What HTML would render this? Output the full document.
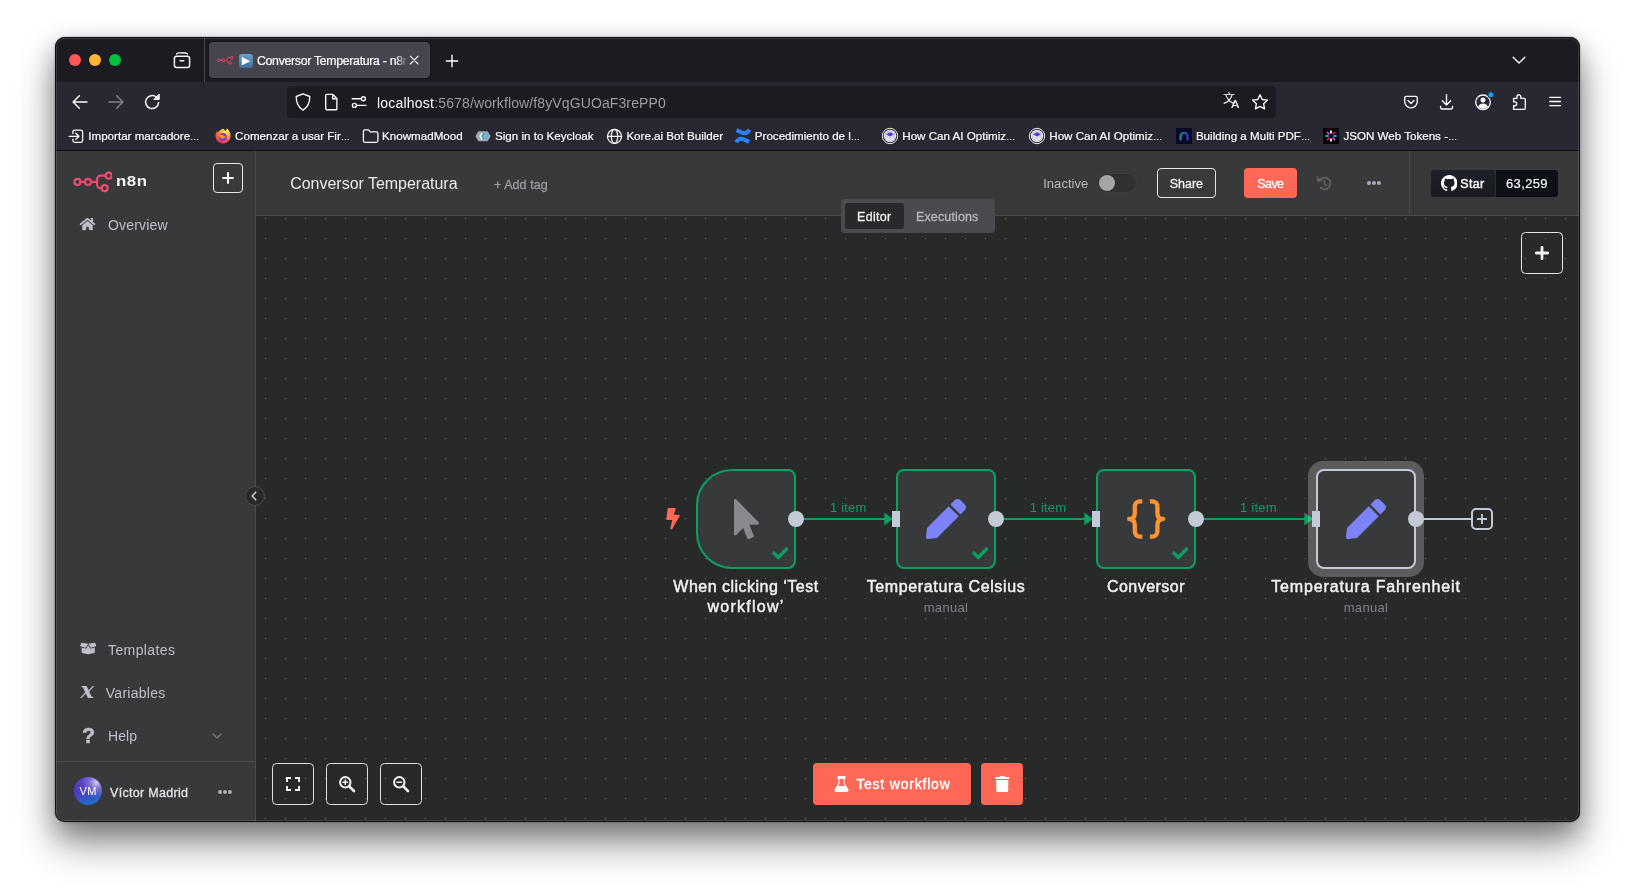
<!DOCTYPE html>
<html lang="es">
<head>
<meta charset="utf-8">
<title>Conversor Temperatura - n8n</title>
<style>
*{box-sizing:border-box;margin:0;padding:0}
html,body{width:1635px;height:895px;overflow:hidden;background:#fff}
body{font-family:"Liberation Sans",sans-serif;position:relative;color:#fff}
.abs,.abs *{position:absolute}
#win{position:absolute;left:55px;top:37px;width:1525px;height:785px;border-radius:10px;overflow:hidden;background:#27292a;z-index:2}
#shadow{position:absolute;left:55px;top:37px;width:1525px;height:785px;border-radius:10px;
 box-shadow:0 22px 38px rgba(0,0,0,.42),0 9px 24px rgba(0,0,0,.24),0 0 2px rgba(0,0,0,.4);z-index:1}
#rim{position:absolute;left:55px;top:37px;width:1525px;height:785px;border-radius:10px;z-index:50;pointer-events:none;
 box-shadow:inset 0 0 0 1px rgba(0,0,0,.75),inset 0 0 0 2px rgba(255,255,255,.13)}
/* everything inside #pg uses page coordinates */
#pg{position:absolute;left:-55px;top:-37px;width:1635px;height:895px;will-change:transform}
#pg div,#pg svg,#pg span{position:absolute}
.t{white-space:nowrap;line-height:1}
/* browser chrome */
#tabbar{left:55px;top:37px;width:1525px;height:45px;background:#1c1b22}
#navbar{left:55px;top:82px;width:1525px;height:68px;background:#292832}
#chromeline{left:55px;top:150px;width:1525px;height:1px;background:#0e0e11}
#tab{left:209px;top:42px;width:221px;height:36px;border-radius:4px;background:#45444f;box-shadow:0 0 3px rgba(0,0,0,.45)}
#urlbar{left:287px;top:86px;width:989px;height:32px;border-radius:4px;background:#1c1b22}
.bm{font-size:11.6px;color:#fbfbfe;top:129.700px;-webkit-text-stroke:.2px #fbfbfe}
/* app */
#sidebar{left:55px;top:151px;width:200px;height:671px;background:#38393b}
#sideborder{left:255px;top:151px;width:1px;height:671px;background:#4b4c4f}
#header{left:256px;top:151px;width:1324px;height:64px;background:#38393b}
#headline{left:256px;top:215px;width:1324px;height:1px;background:#4b4c4f}

.os{font-family:"Liberation Sans",sans-serif}
.nav{font-size:14px;color:#bdc0c8;left:108px}
</style>
</head>
<body>
<div id="shadow"></div>
<div id="win"><div id="pg">
<!--CHROME-->
<div id="tabbar"></div>
<div id="navbar"></div>
<div id="chromeline"></div>
<!-- traffic lights -->
<div style="left:69px;top:54px;width:12px;height:12px;border-radius:50%;background:#ff5753"></div>
<div style="left:89px;top:54px;width:12px;height:12px;border-radius:50%;background:#ffb538"></div>
<div style="left:109px;top:54px;width:12px;height:12px;border-radius:50%;background:#00c140"></div>
<!-- firefox view icon -->
<svg style="left:172px;top:50px" width="20" height="20" viewBox="172 50 20 20" fill="none" stroke="#fbfbfe" stroke-width="1.450" stroke-linecap="round" stroke-linejoin="round">
 <path d="M176.700 54a1.900 1.900 0 0 1 1.700-1.100h7.200a1.900 1.900 0 0 1 1.700 1.100"/><rect x="174.400" y="56.300" width="15.200" height="11.200" rx="2.300"/><path d="M180.200 60.700h3.600"/>
</svg>
<div style="left:204px;top:37px;width:1px;height:45px;background:#4a4953"></div>
<!-- tab -->
<div id="tab"></div>
<svg style="left:216.500px;top:54.700px" width="17" height="10.500" viewBox="0 0 39 21" fill="none" stroke="#c9445f" stroke-width="2.6">
 <circle cx="4.5" cy="10.5" r="3"/><circle cx="14.5" cy="10.5" r="3"/><circle cx="34" cy="4.5" r="3"/><circle cx="30" cy="16.5" r="3"/>
 <path d="M7.5 10.5h4M17.5 10.5h3c3 0 2.5-6 6-6h4.5M20.5 10.5c3 0 2.5 6 6.5 6"/>
</svg>
<div style="left:239px;top:54px;width:14px;height:14px;border-radius:3px;background:linear-gradient(#6e9fc6,#3d719e)"></div>
<span class="t" style="left:239px;top:54px;width:14px;height:14px;font-family:'DejaVu Sans',sans-serif;font-size:11px;line-height:14px;text-align:center;color:#fff">▶</span>
<div style="left:257px;top:48px;width:152px;height:24px;overflow:hidden;-webkit-mask-image:linear-gradient(to right,#000 139px,transparent 151px);mask-image:linear-gradient(to right,#000 139px,transparent 151px)">
 <span class="t" style="left:0;top:7px;font-size:12.3px;color:#fbfbfe;letter-spacing:-0.3px;-webkit-text-stroke:.2px #fbfbfe">Conversor Temperatura - n8n</span>
</div>
<svg style="left:408px;top:54px" width="12" height="12" viewBox="0 0 12 12" fill="none" stroke="#fbfbfe" stroke-width="1.1" stroke-linecap="round"><path d="M2.3 2.2l7.8 7.8M10.1 2.2L2.3 10"/></svg>
<svg style="left:445px;top:54px" width="14" height="14" viewBox="0 0 14 14" fill="none" stroke="#fbfbfe" stroke-width="1.4" stroke-linecap="round"><path d="M7 1.3v11.4M1.3 7h11.4"/></svg>
<svg style="left:1511px;top:53px" width="16" height="14" viewBox="0 0 16 14" fill="none" stroke="#fbfbfe" stroke-width="1.4" stroke-linecap="round" stroke-linejoin="round"><path d="M2.2 4.2l5.8 5.8 5.8-5.8"/></svg>
<!-- nav buttons -->
<svg style="left:70px;top:92px" width="20" height="20" viewBox="70 92 20 20" fill="none" stroke="#fbfbfe" stroke-width="1.45" stroke-linecap="round" stroke-linejoin="round"><path d="M87 102H73.2M79.3 95.8l-6.2 6.2 6.2 6.2"/></svg>
<svg style="left:106px;top:92px;opacity:.42" width="20" height="20" viewBox="106 92 20 20" fill="none" stroke="#fbfbfe" stroke-width="1.45" stroke-linecap="round" stroke-linejoin="round"><path d="M109 102h13.8M116.7 95.8l6.2 6.2-6.2 6.2"/></svg>
<svg style="left:142px;top:92px" width="20" height="20" viewBox="142 92 20 20" fill="none" stroke="#fbfbfe" stroke-width="1.45" stroke-linecap="round" stroke-linejoin="round"><path d="M158.6 102.4a6.5 6.5 0 1 1-2.3-5.3"/><path d="M159.2 94.4v5h-5z" fill="#fbfbfe" stroke-width="1"/></svg>
<!-- url bar -->
<div id="urlbar"></div>
<svg style="left:293px;top:92px" width="20" height="20" viewBox="293 92 20 20" fill="none" stroke="#fbfbfe" stroke-width="1.35" stroke-linejoin="round"><path d="M303 93.8l6.8 2.7c0 6.2-2.2 11-6.8 13.6-4.6-2.600-6.800-7.400-6.800-13.600z"/></svg>
<svg style="left:321px;top:92px" width="20" height="20" viewBox="321 92 20 20" fill="none" stroke="#fbfbfe" stroke-width="1.35" stroke-linejoin="round"><path d="M326.900 94.400h6l4 4v10.200a1.200 1.200 0 0 1-1.200 1.200h-8.800a1.200 1.200 0 0 1-1.200-1.200v-13a1.200 1.200 0 0 1 1.200-1.200z"/><path d="M332.700 94.600v4.200h4.100" /></svg>
<svg style="left:349px;top:92px" width="20" height="20" viewBox="349 92 20 20" fill="none" stroke="#fbfbfe" stroke-width="1.35" stroke-linecap="round"><path d="M352.200 98.700h8.300M357.500 105.400h8.400"/><circle cx="363.400" cy="98.700" r="2"/><circle cx="354.400" cy="105.400" r="2"/></svg>
<span class="t" style="left:377px;top:96.3px;font-size:14px;color:#fbfbfe;letter-spacing:.19px">localhost</span>
<span class="t" style="left:434.300px;top:96.3px;font-size:14px;color:#9b9ba6;letter-spacing:.115px">:5678/workflow/f8yVqGUOaF3rePP0</span>
<!-- translate icon (real text) -->
<span class="t" style="left:1222.900px;top:93.200px;font-family:'Liberation Sans','Noto Sans CJK SC',sans-serif;font-size:12px;color:#fbfbfe">文</span>
<span class="t" style="left:1231.300px;top:98.800px;font-size:11.800px;color:#fbfbfe;-webkit-text-stroke:.15px">A</span>
<svg style="left:1250px;top:92px" width="20" height="20" viewBox="1250 92 20 20" fill="none" stroke="#fbfbfe" stroke-width="1.35" stroke-linejoin="round"><path d="M1260 94.800l2.250 4.700 5.100.65-3.700 3.600.9 5.100-4.550-2.450-4.550 2.450.9-5.100-3.700-3.600 5.100-.65z"/></svg>
<!-- right toolbar -->
<svg style="left:1401px;top:92px" width="20" height="20" viewBox="1401 92 20 20" fill="none" stroke="#fbfbfe" stroke-width="1.35" stroke-linecap="round" stroke-linejoin="round"><path d="M1404.700 97.900a1.600 1.600 0 0 1 1.600-1.600h9.400a1.600 1.600 0 0 1 1.600 1.600v3.600a6.300 6.300 0 0 1-12.600 0z"/><path d="M1408 100.600l3 2.900 3-2.900"/></svg>
<svg style="left:1437px;top:92px" width="20" height="20" viewBox="1437 92 20 20" fill="none" stroke="#fbfbfe" stroke-width="1.35" stroke-linecap="round" stroke-linejoin="round"><path d="M1446.500 94.600v10.200M1442.300 100.700l4.200 4.200 4.200-4.200M1440.600 106.300v1.400a1.300 1.300 0 0 0 1.300 1.300h9.300a1.300 1.300 0 0 0 1.300-1.300v-1.400"/></svg>
<svg style="left:1473px;top:90px" width="24" height="24" viewBox="1473 90 24 24" fill="none" stroke="#fbfbfe" stroke-width="1.35"><circle cx="1483" cy="102.300" r="7.300"/><circle cx="1483" cy="100" r="2.500" fill="#fbfbfe" stroke="none"/><path d="M1478.300 106.800c.8-2.100 2.500-3.200 4.700-3.200s3.900 1.100 4.700 3.200c-1.300 1.300-2.900 2-4.700 2s-3.400-.7-4.700-2z" fill="#fbfbfe" stroke="none"/><circle cx="1490.800" cy="94.800" r="3" fill="#00a9f4" stroke="#292832" stroke-width="1"/></svg>
<svg style="left:1510px;top:92px" width="20" height="20" viewBox="1510 92 20 20" fill="none" stroke="#fbfbfe" stroke-width="1.35" stroke-linejoin="round"><path d="M1513.600 98.300h3.400v-1.600a1.900 1.900 0 0 1 3.800 0v1.600h3.200a1.300 1.300 0 0 1 1.300 1.300v8.400a1.300 1.300 0 0 1-1.300 1.300h-10.400v-3.600h1.200a1.900 1.900 0 0 0 0-3.800h-1.200z"/></svg>
<svg style="left:1545px;top:92px" width="20" height="20" viewBox="1545 92 20 20" fill="none" stroke="#fbfbfe" stroke-width="1.300" stroke-linecap="round"><path d="M1549.800 97.400h10.700M1549.800 101.500h10.700M1549.800 105.600h10.700"/></svg>
<!-- bookmarks -->
<svg style="left:67px;top:127px" width="18" height="18" viewBox="67 127 18 18" fill="none" stroke="#fbfbfe" stroke-width="1.3" stroke-linecap="round" stroke-linejoin="round"><path d="M72.900 133.400v-1.400a1.800 1.800 0 0 1 1.800-1.800h6.100a1.800 1.800 0 0 1 1.800 1.800v8.600a1.800 1.800 0 0 1-1.800 1.800h-6.100a1.800 1.800 0 0 1-1.800-1.800v-1.400"/><path d="M69.200 136.300h9.600M75.800 133.200l3.100 3.100-3.100 3.100"/></svg>
<span class="t bm" style="left:88.300px">Importar marcadore<span style="position:static;font-size:9.300px;letter-spacing:0">…</span></span>
<svg style="left:214px;top:127px" width="18" height="18" viewBox="0 0 18 18"><defs><radialGradient id="ffg" cx=".7" cy=".15" r="1"><stop offset="0" stop-color="#fff36b"/><stop offset=".3" stop-color="#ffbd2e"/><stop offset=".6" stop-color="#ff6a2a"/><stop offset="1" stop-color="#e31587"/></radialGradient></defs><path d="M9 1.800c1.200.6 2 1.500 2.400 2.400 1-.7 1.300-1.900 1.300-2.900 2.600 1.900 3.900 4.700 3.900 7.700a7.600 7.600 0 0 1-15.200 0c0-2 .6-3.800 1.800-5.300 0 .9.200 1.600.6 2.200.9-1.900 2.900-3.200 5.200-4.100z" fill="url(#ffg)"/><circle cx="9" cy="10" r="3.900" fill="#7a3bd8"/><path d="M5.300 8.300c1.500-.9 3.600-.5 4.600.6 1.300.2 2.200.9 2.800 2-1.500-.6-2.700-.2-3.500.6-1.500.6-3.500-.6-3.900-3.200z" fill="#ff9a2e"/></svg>
<span class="t bm" style="left:235.100px">Comenzar a usar Fir<span style="position:static;font-size:9.300px;letter-spacing:0">…</span></span>
<svg style="left:361px;top:127px" width="20" height="18" viewBox="361 127 20 18" fill="none" stroke="#fbfbfe" stroke-width="1.3" stroke-linejoin="round"><path d="M363.400 131.400a1.500 1.500 0 0 1 1.500-1.500h3.600l1.900 2h6a1.500 1.500 0 0 1 1.500 1.500v7.400a1.500 1.500 0 0 1-1.500 1.500h-11.500a1.500 1.500 0 0 1-1.500-1.500z"/></svg>
<span class="t bm" style="left:382.100px">KnowmadMood</span>
<svg style="left:475px;top:128px" width="16" height="16" viewBox="475 128 16 16"><path d="M478.400 131.200h9.200l3 5-3 5h-9.200l-3-5z" fill="#a7a8aa"/><path d="M482.100 132.900l-1.900 3.300 1.900 3.300" fill="none" stroke="#f4fbfe" stroke-width="1.500"/><path d="M484.300 132.900l-1.900 3.300 1.900 3.300" fill="none" stroke="#1cb3e4" stroke-width="1.500"/><path d="M485.700 132.900l1.900 3.300-1.900 3.300" fill="none" stroke="#3fc2ea" stroke-width="1.500"/></svg>
<span class="t bm" style="left:495px">Sign in to Keycloak</span>
<svg style="left:606px;top:128px" width="17" height="17" viewBox="0 0 17 17" fill="none" stroke="#fbfbfe" stroke-width="1.250"><circle cx="8.500" cy="8.400" r="7"/><ellipse cx="8.500" cy="8.400" rx="3.200" ry="7"/><path d="M1.500 8.400h14"/></svg>
<span class="t bm" style="left:626.400px">Kore.ai Bot Builder</span>
<svg style="left:734px;top:127px" width="18" height="18" viewBox="734 127 18 18" fill="none" stroke="#2684ff" stroke-width="4"><path d="M736.200 142.300c2.100-3.700 4.600-4.400 7.900-2.800l5 2.400"/><path d="M749.400 129.700c-2.100 3.700-4.600 4.400-7.900 2.800l-5-2.400"/></svg>
<span class="t bm" style="left:754.800px">Procedimiento de l<span style="position:static;font-size:9.300px;letter-spacing:0">…</span></span>
<svg style="left:881px;top:127px" width="18" height="18" viewBox="0 0 18 18"><circle cx="9" cy="9" r="7.700" fill="none" stroke="#e6e6f2" stroke-width="1"/><circle cx="9" cy="9" r="6.200" fill="#f6f5fc"/><path d="M9 3.600l4.700 2.700v5.400L9 14.400l-4.700-2.700V6.300z" fill="#fff" stroke="#9693b3" stroke-width=".7"/><path d="M9 4.900l4.100 2.400L9 9.700 4.900 7.300z" fill="#5a3ad8"/><path d="M4.900 8.100L9 10.500l4.100-2.400v2.300L9 12.900l-4.100-2.500z" fill="#d6d3e8"/></svg>
<span class="t bm" style="left:902.300px">How Can AI Optimiz<span style="position:static;font-size:9.300px;letter-spacing:0">…</span></span>
<svg style="left:1028px;top:127px" width="18" height="18" viewBox="0 0 18 18"><circle cx="9" cy="9" r="7.700" fill="none" stroke="#e6e6f2" stroke-width="1"/><circle cx="9" cy="9" r="6.200" fill="#f6f5fc"/><path d="M9 3.600l4.700 2.700v5.400L9 14.400l-4.700-2.700V6.300z" fill="#fff" stroke="#9693b3" stroke-width=".7"/><path d="M9 4.900l4.100 2.400L9 9.700 4.900 7.300z" fill="#5a3ad8"/><path d="M4.900 8.100L9 10.500l4.100-2.400v2.300L9 12.900l-4.100-2.500z" fill="#d6d3e8"/></svg>
<span class="t bm" style="left:1049.300px">How Can AI Optimiz<span style="position:static;font-size:9.300px;letter-spacing:0">…</span></span>
<svg style="left:1176px;top:128px" width="16" height="16" viewBox="0 0 16 16"><defs><linearGradient id="pdfg" x1="0" x2="1" y1="0" y2="0"><stop offset="0" stop-color="#1d8296"/><stop offset="1" stop-color="#2c3fb4"/></linearGradient></defs><rect width="16" height="16" fill="#0a0924"/><path d="M4.600 12.500V8.300a3.500 3.500 0 0 1 7 0v4.200" fill="none" stroke="url(#pdfg)" stroke-width="2.300"/></svg>
<span class="t bm" style="left:1195.900px">Building a Multi PDF<span style="position:static;font-size:9.300px;letter-spacing:0">…</span></span>
<svg style="left:1323px;top:128px" width="16" height="16" viewBox="0 0 16 16"><rect width="16" height="16" fill="#000"/><g stroke-width="1.800" stroke-linecap="butt"><path d="M8 2.400v3.200M8 10.400v3.200" stroke="#fff"/><path d="M2.400 8h3.200M10.400 8h3.200" stroke="#00b9f1"/><path d="M4 4l2.300 2.300M9.700 9.700L12 12" stroke="#d63aff"/><path d="M12 4L9.700 6.300M6.300 9.700L4 12" stroke="#fb015b"/></g></svg>
<span class="t bm" style="left:1343.400px">JSON Web Tokens -<span style="position:static;font-size:9.300px;letter-spacing:0">…</span></span>
<!--/CHROME-->
<!--APP-->
<div id="sidebar"></div>
<div id="header"></div>
<div id="headline"></div>
<svg id="canvas" style="left:256px;top:216px" width="1324" height="606" viewBox="256 216 1324 606">
 <defs><pattern id="dots" x="265" y="218" width="20" height="20" patternUnits="userSpaceOnUse"><rect x="0" y="0" width="1" height="1" fill="#6e6f71" shape-rendering="crispEdges"/></pattern></defs>
 <rect x="256" y="216" width="1324" height="606" fill="#282a2a"/>
 <rect x="256" y="216" width="1324" height="606" fill="url(#dots)"/>
</svg>
<div id="sideborder"></div>
<!-- SIDEBAR -->
<svg style="left:72px;top:169px" width="39.900" height="26" viewBox="72 169 39.900 26" fill="none" stroke="#ee4a72" stroke-width="2.200">
 <circle cx="77.500" cy="181.900" r="3"/><circle cx="88" cy="181.900" r="3"/><circle cx="108.750" cy="175.700" r="3"/><circle cx="104.700" cy="188.200" r="3"/>
 <path d="M80.500 181.900h4.500M91 181.900h6M105.750 175.700h-5a3.700 3.700 0 0 0-3.700 3.700v5.100a3.700 3.700 0 0 0 3.700 3.700h1"/>
</svg>
<span class="t" style="left:116.200px;top:173.700px;font-size:14.300px;font-weight:700;color:#f2f3f5;letter-spacing:.45px;transform:scaleX(1.18);transform-origin:0 0">n8n</span>
<div style="left:213px;top:163px;width:30px;height:30px;border:1px solid #e4e6ea;border-radius:4px"></div>
<svg style="left:221px;top:171px" width="14" height="14" viewBox="0 0 14 14" stroke="#f2f3f5" stroke-width="2.1" stroke-linecap="round"><path d="M7 2.100v9.800M2.100 7h9.800"/></svg>
<!-- Overview -->
<svg style="left:79.400px;top:217px" width="17" height="14" viewBox="0 0 576 512" fill="#bdc0c8"><path d="M280 148L96 300v164a16 16 0 0 0 16 16l112-.3a16 16 0 0 0 16-16V368a16 16 0 0 1 16-16h64a16 16 0 0 1 16 16v95.600a16 16 0 0 0 16 16.100l112 .3a16 16 0 0 0 16-16V300L296 148a12 12 0 0 0-16 0zM572 251l-84-69V44a12 12 0 0 0-12-12h-56a12 12 0 0 0-12 12v73l-89-74a48 48 0 0 0-61 0L4 251a12 12 0 0 0-2 17l26 31a12 12 0 0 0 17 2L280 107a12 12 0 0 1 16 0l235 194a12 12 0 0 0 17-2l26-31a12 12 0 0 0-2-17z"/></svg>
<span class="t nav" style="top:217.800px;letter-spacing:.19px">Overview</span>
<!-- Templates -->
<svg style="left:79.900px;top:642.100px" width="16.500" height="13.200" viewBox="0 0 640 512" fill="#bdc0c8"><path d="M425.700 256c-16.900 0-32.800-9-41.400-23.400L320 126l-64.200 106.600c-8.700 14.500-24.600 23.500-41.500 23.500-4.500 0-9-.6-13.300-1.900L64 215v178c0 14.700 10 27.500 24.200 31l216.200 54.100c10.200 2.500 20.900 2.500 31 0L551.800 424c14.200-3.600 24.200-16.400 24.200-31V215l-137 39.100c-4.300 1.300-8.800 1.900-13.300 1.900zm212.600-112.200L586.800 41c-3.100-6.200-9.800-9.800-16.700-8.900L320 64l91.700 152.100c3.800 6.300 11.400 9.300 18.500 7.300l197.900-56.500c9.900-2.900 14.700-13.900 10.200-23.100zM53.200 41L1.700 143.800c-4.600 9.200.3 20.200 10.100 23l197.900 56.500c7.100 2 14.700-1 18.500-7.300L320 64 69.800 32.100c-6.900-.8-13.500 2.700-16.600 8.900z"/></svg>
<span class="t nav" style="top:642.800px;letter-spacing:.4px">Templates</span>
<!-- Variables -->
<span class="t" style="left:80.600px;top:679px;font-family:'DejaVu Serif','Liberation Serif',serif;font-style:italic;font-weight:700;font-size:22.500px;color:#bdc0c8">x</span>
<span class="t nav" style="left:105.800px;top:685.800px;letter-spacing:.27px">Variables</span>
<!-- Help -->
<span class="t" style="left:82px;top:726.200px;font-size:21.500px;font-weight:700;color:#bdc0c8;-webkit-text-stroke:.5px">?</span>
<span class="t nav" style="top:728.800px;letter-spacing:.1px">Help</span>
<svg style="left:212px;top:732px" width="10" height="8" viewBox="0 0 10 8" fill="none" stroke="#7b7d83" stroke-width="1.100" stroke-linecap="round" stroke-linejoin="round"><path d="M1 2l4 4 4-4"/></svg>
<div style="left:55px;top:761px;width:200px;height:1px;background:#4b4c4f"></div>
<!-- user -->
<div style="left:74px;top:777px;width:28px;height:28px;border-radius:50%;background:radial-gradient(circle at 80% 20%,rgba(228,226,248,.85) 0,rgba(200,196,240,.35) 22%,rgba(160,150,230,0) 48%),linear-gradient(165deg,#5a3dc6 20%,#4a3dbf 50%,#1b6fc9 88%)"></div>
<span class="t" style="left:74px;top:777px;width:28px;height:28px;line-height:28.300px;text-align:center;font-size:11px;color:#fff;letter-spacing:.3px;text-indent:.3px">VM</span>
<span class="t" style="left:110px;top:786.900px;font-size:12.5px;color:#e0e2e7;-webkit-text-stroke:.3px;letter-spacing:.3px">Víctor Madrid</span>
<svg style="left:217px;top:789px" width="16" height="6" viewBox="0 0 16 6" fill="#b3b6bf"><circle cx="3.100" cy="3" r="1.900"/><circle cx="8" cy="3" r="1.900"/><circle cx="12.900" cy="3" r="1.900"/></svg>
<!-- collapse -->
<div style="left:245px;top:486px;width:20px;height:20px;border-radius:50%;background:#282a2a;border:1px solid #4b4c4f"></div>
<svg style="left:250px;top:490px" width="8" height="12" viewBox="0 0 8 12" fill="none" stroke="#c7cbd6" stroke-width="1.500" stroke-linejoin="miter"><path d="M6.200 1.800L2.200 6l4 4.200"/></svg>
<!-- HEADER -->
<span class="t" style="left:290.200px;top:176.200px;font-size:16px;color:#e8e9ec;letter-spacing:-.02px">Conversor Temperatura</span>
<span class="t" style="left:493.900px;top:179.300px;font-size:12.5px;color:#9c9ea4;-webkit-text-stroke:.3px;letter-spacing:.08px">+ Add tag</span>
<span class="t" style="left:1043.200px;top:177.200px;font-size:13px;color:#b6b8be;letter-spacing:.04px">Inactive</span>
<div style="left:1097px;top:173px;width:40px;height:20px;border-radius:10px;background:#2f3032;border:1px solid #3e3f42"></div>
<div style="left:1099px;top:175px;width:16px;height:16px;border-radius:50%;background:#a4a5a8"></div>
<div style="left:1157px;top:168px;width:59px;height:30px;border:1px solid #e4e6ea;border-radius:4px"></div>
<span class="t" style="left:1169.800px;top:177.800px;font-size:12.5px;color:#eceef1;-webkit-text-stroke:.3px;letter-spacing:-.05px">Share</span>
<div style="left:1244px;top:168px;width:53px;height:30px;border-radius:4px;background:#ff6757"></div>
<span class="t" style="left:1257.200px;top:177.800px;font-size:12.5px;color:#fff;-webkit-text-stroke:.3px;letter-spacing:-.55px">Save</span>
<svg style="left:1316px;top:175px" width="16" height="16" viewBox="0 0 16 16" fill="none" stroke="#5f6165" stroke-width="1.800" stroke-linecap="round"><path d="M4.600 4.300A5.800 5.800 0 1 1 4.500 12.600"/><path d="M1.200 1.400v4.900h4.900z" fill="#5f6165" stroke-width=".6" stroke-linejoin="round"/><path d="M8.400 5.400v3.400l1.900 1.400" stroke-width="1.500"/></svg>
<svg style="left:1366px;top:180px" width="16" height="6" viewBox="0 0 16 6" fill="#a9adb8"><circle cx="3" cy="3" r="2"/><circle cx="7.950" cy="3" r="2"/><circle cx="12.900" cy="3" r="2"/></svg>
<div style="left:1409px;top:151px;width:1px;height:64px;background:#4b4c4f"></div>
<div style="left:1431px;top:170px;width:65px;height:27px;border-radius:3px 0 0 3px;background:linear-gradient(#1d2127,#181c21)"></div>
<div style="left:1496px;top:170px;width:62px;height:27px;border-radius:0 3px 3px 0;background:#0d1117"></div>
<div style="left:1495px;top:170px;width:1px;height:27px;background:#2c3036"></div>
<svg style="left:1440.500px;top:175px" width="16.500" height="16.500" viewBox="0 0 16 16" fill="#fff"><path d="M8 0C3.580 0 0 3.580 0 8c0 3.540 2.290 6.530 5.470 7.590.4.070.55-.17.550-.38 0-.19-.01-.82-.01-1.490-2.010.37-2.530-.49-2.690-.94-.09-.23-.48-.94-.82-1.130-.28-.15-.68-.52-.01-.53.63-.01 1.080.58 1.230.82.720 1.210 1.870.87 2.330.66.070-.52.280-.87.510-1.070-1.780-.2-3.640-.89-3.640-3.950 0-.87.310-1.590.820-2.150-.080-.2-.360-1.020.080-2.120 0 0 .670-.21 2.200.820.640-.18 1.320-.27 2-.27s1.360.09 2 .270c1.530-1.040 2.200-.82 2.200-.82.440 1.100.160 1.920.080 2.120.510.560.820 1.270.820 2.150 0 3.070-1.870 3.750-3.650 3.950.290.250.540.730.540 1.480 0 1.070-.010 1.930-.010 2.200 0 .210.150.460.550.380A8.010 8.010 0 0 0 16 8c0-4.420-3.580-8-8-8z"/></svg>
<span class="t" style="left:1460.300px;top:177.800px;font-size:12.500px;color:#fff;-webkit-text-stroke:.4px;letter-spacing:.34px">Star</span>
<span class="t" style="left:1505.900px;top:177px;font-size:13px;color:#fff;-webkit-text-stroke:.12px;letter-spacing:.39px">63,259</span>
<!-- editor/executions tabs -->
<div style="left:841px;top:199px;width:154px;height:34px;border-radius:4px;background:#4a4b4e"></div>
<div style="left:845px;top:203px;width:59px;height:26px;border-radius:3px;background:#282a2a"></div>
<span class="t" style="left:857.100px;top:211.200px;font-size:12.5px;color:#eceef1;-webkit-text-stroke:.3px;letter-spacing:.29px">Editor</span>
<span class="t" style="left:916px;top:211.200px;font-size:12.5px;color:#b6b8be;-webkit-text-stroke:.3px;letter-spacing:.13px">Executions</span>
<!-- canvas add button -->
<div style="left:1521px;top:232px;width:42px;height:42px;border:1px solid #e4e6ea;border-radius:4.500px"></div>
<svg style="left:1534.100px;top:245px" width="16" height="16" viewBox="0 0 16 16" stroke="#eef0f6" stroke-width="2.800" stroke-linecap="round"><path d="M8 2.300v11.400M2.300 8h11.400"/></svg>
<!--NODES-->
<!-- connections -->
<svg style="left:256px;top:440px" width="1324" height="200" viewBox="256 440 1324 200">
 <g stroke="#08a162" stroke-width="2" fill="#08a162">
  <path d="M800 519H886" fill="none"/><path d="M884.400 512.500l8.400 6.500-8.400 6.500z" stroke="none"/>
  <path d="M1000 519H1086" fill="none"/><path d="M1084.400 512.500l8.400 6.500-8.400 6.500z" stroke="none"/>
  <path d="M1200 519H1306" fill="none"/><path d="M1304.400 512.500l8.400 6.500-8.400 6.500z" stroke="none"/>
 </g>
 <path d="M1420 519H1472" stroke="#c3c9d5" stroke-width="2"/>
</svg>
<span class="t" style="left:829.900px;top:501px;font-size:13px;color:#0f9c62;letter-spacing:.2px">1 item</span>
<span class="t" style="left:1029.700px;top:501px;font-size:13px;color:#0f9c62;letter-spacing:.2px">1 item</span>
<span class="t" style="left:1240.100px;top:501px;font-size:13px;color:#0f9c62;letter-spacing:.2px">1 item</span>
<!-- node 1 trigger -->
<svg style="left:666px;top:508px" width="14" height="21.500" viewBox="0 0 320 512" fill="#ff6757"><path d="M296 160H180.600l42.600-129.800C227.200 15 215.700 0 200 0H56C44 0 33.800 8.900 32.200 20.800l-32 240C-1.700 275.200 9.500 288 24 288h118.700L96.600 482.500c-3.600 15.200 8 29.500 23.300 29.500 8.400 0 16.400-4.400 20.800-12l176-304c9.300-15.900-2.200-36-20.700-36z"/></svg>
<div style="left:696px;top:469px;width:100px;height:100px;border:2px solid #08a162;border-radius:36px 8px 8px 36px;background:#38393b"></div>
<svg style="left:734px;top:499px" width="25" height="40" viewBox="0 0 320 512" fill="#88898f"><path d="M302.189 329.126H196.105l55.831 135.993c3.889 9.428-.555 19.999-9.444 23.999l-49.165 21.427c-9.165 4-19.443-.571-23.332-9.714l-53.053-129.136-86.664 89.138C18.729 472.710 0 463.554 0 447.977V18.299C0 1.899 19.921-6.096 30.277 5.443l284.412 292.542c11.472 11.179 3.007 31.141-12.500 31.141z"/></svg>
<svg class="chk" style="left:772px;top:545px" width="16.500" height="16.500" viewBox="0 0 512 512" fill="#08a162"><path d="M173.898 439.404l-166.400-166.400c-9.997-9.997-9.997-26.206 0-36.204l36.203-36.204c9.997-9.998 26.207-9.998 36.204 0L192 312.690 432.095 72.596c9.997-9.997 26.207-9.997 36.204 0l36.203 36.204c9.997 9.997 9.997 26.206 0 36.204l-294.400 294.401c-9.998 9.997-26.207 9.997-36.204-.001z"/></svg>
<div style="left:788px;top:511px;width:16px;height:16px;border-radius:50%;background:#c3c9d5"></div>
<span class="t" style="left:646px;top:577px;width:200px;text-align:center;font-size:16px;line-height:20px;color:#f1f2f4;-webkit-text-stroke:.45px;letter-spacing:.49px;white-space:normal">When clicking ‘Test<br><span style="position:static;letter-spacing:1.25px">workflow’</span></span>
<!-- node 2 -->
<div style="left:896px;top:469px;width:100px;height:100px;border:2px solid #08a162;border-radius:8px;background:#38393b"></div>
<div style="left:892px;top:511px;width:8px;height:16px;background:#c3c9d5"></div>
<svg style="left:926px;top:499px" width="40" height="40" viewBox="0 0 512 512" fill="#7d84fb"><path d="M290.740 93.240l128.020 128.020-277.990 277.990-114.140 12.600C11.350 513.540-1.560 500.620.140 485.340l12.700-114.220 277.900-277.880zm207.200-19.060l-60.110-60.110c-18.750-18.750-49.160-18.750-67.910 0l-56.550 56.550 128.020 128.020 56.550-56.550c18.750-18.760 18.750-49.160 0-67.910z"/></svg>
<svg class="chk" style="left:972px;top:545px" width="16.500" height="16.500" viewBox="0 0 512 512" fill="#08a162"><path d="M173.898 439.404l-166.400-166.400c-9.997-9.997-9.997-26.206 0-36.204l36.203-36.204c9.997-9.998 26.207-9.998 36.204 0L192 312.690 432.095 72.596c9.997-9.997 26.207-9.997 36.204 0l36.203 36.204c9.997 9.997 9.997 26.206 0 36.204l-294.400 294.401c-9.998 9.997-26.207 9.997-36.204-.001z"/></svg>
<div style="left:988px;top:511px;width:16px;height:16px;border-radius:50%;background:#c3c9d5"></div>
<span class="t" style="left:846px;top:577px;width:200px;text-align:center;font-size:16px;line-height:20px;color:#f1f2f4;-webkit-text-stroke:.45px;letter-spacing:.63px">Temperatura Celsius</span>
<span class="t" style="left:896px;top:600px;width:100px;text-align:center;font-size:13px;line-height:15px;color:#7f8188;letter-spacing:.35px">manual</span>
<!-- node 3 -->
<div style="left:1096px;top:469px;width:100px;height:100px;border:2px solid #08a162;border-radius:8px;background:#38393b"></div>
<div style="left:1092px;top:511px;width:8px;height:16px;background:#c3c9d5"></div>
<svg style="left:1124px;top:497px" width="44" height="44" viewBox="1124 497 44 44" fill="none" stroke="#ff9433" stroke-width="4.300"><path stroke-linejoin="round" d="M1142.300 501.300h-2.300a5.200 5.200 0 0 0-5.200 5.200v6.400c0 3.600-1.700 6.100-5.700 6.100 4 0 5.700 2.500 5.700 6.100v6.400a5.200 5.200 0 0 0 5.200 5.200h2.300"/><path stroke-linejoin="round" d="M1149.900 501.300h2.300a5.200 5.200 0 0 1 5.200 5.200v6.400c0 3.600 1.700 6.100 5.700 6.100-4 0-5.700 2.500-5.700 6.100v6.400a5.200 5.200 0 0 1-5.200 5.200h-2.300"/></svg>
<svg class="chk" style="left:1172px;top:545px" width="16.500" height="16.500" viewBox="0 0 512 512" fill="#08a162"><path d="M173.898 439.404l-166.400-166.400c-9.997-9.997-9.997-26.206 0-36.204l36.203-36.204c9.997-9.998 26.207-9.998 36.204 0L192 312.690 432.095 72.596c9.997-9.997 26.207-9.997 36.204 0l36.203 36.204c9.997 9.997 9.997 26.206 0 36.204l-294.400 294.401c-9.998 9.997-26.207 9.997-36.204-.001z"/></svg>
<div style="left:1188px;top:511px;width:16px;height:16px;border-radius:50%;background:#c3c9d5"></div>
<span class="t" style="left:1046px;top:577px;width:200px;text-align:center;font-size:16px;line-height:20px;color:#f1f2f4;-webkit-text-stroke:.45px;letter-spacing:.47px">Conversor</span>
<!-- node 4 (selected) -->
<div style="left:1308px;top:461px;width:116px;height:116px;border-radius:15px;background:rgba(255,255,255,.235)"></div>
<div style="left:1316px;top:469px;width:100px;height:100px;border:2px solid #c3c9d5;border-radius:8px;background:#38393b"></div>
<div style="left:1312px;top:511px;width:8px;height:16px;background:#c3c9d5"></div>
<svg style="left:1346px;top:499px" width="40" height="40" viewBox="0 0 512 512" fill="#7d84fb"><path d="M290.740 93.240l128.020 128.020-277.990 277.990-114.140 12.600C11.350 513.540-1.560 500.620.140 485.340l12.700-114.220 277.900-277.880zm207.200-19.060l-60.110-60.110c-18.750-18.750-49.160-18.750-67.910 0l-56.550 56.550 128.020 128.020 56.550-56.550c18.750-18.760 18.750-49.160 0-67.910z"/></svg>
<div style="left:1408px;top:511px;width:16px;height:16px;border-radius:50%;background:#c3c9d5"></div>
<div style="left:1471px;top:508px;width:22px;height:22px;border:2px solid #c3c9d5;border-radius:5px;background:#282a2a"></div>
<svg style="left:1476px;top:513px" width="12" height="12" viewBox="0 0 12 12" stroke="#c3c9d5" stroke-width="1.800"><path d="M6 1v10M1 6h10"/></svg>
<span class="t" style="left:1246px;top:577px;width:240px;text-align:center;font-size:16px;line-height:20px;color:#f1f2f4;-webkit-text-stroke:.45px;letter-spacing:.85px">Temperatura Fahrenheit</span>
<span class="t" style="left:1316px;top:600px;width:100px;text-align:center;font-size:13px;line-height:15px;color:#7f8188;letter-spacing:.35px">manual</span>
<!--/NODES-->
<!-- bottom-left controls -->
<div style="left:272px;top:763px;width:42px;height:42px;border:1px solid #dcdee3;border-radius:4.500px"></div>
<svg style="left:286px;top:777px" width="14" height="14" viewBox="0 0 14 14" fill="none" stroke="#f2f3f5" stroke-width="2"><path d="M1 5V1h4M9 1h4v4M13 9v4H9M5 13H1V9"/></svg>
<div style="left:326px;top:763px;width:42px;height:42px;border:1px solid #dcdee3;border-radius:4.500px"></div>
<svg style="left:338px;top:775px" width="18" height="18" viewBox="0 0 18 18" fill="none" stroke="#f2f3f5" stroke-width="2" stroke-linecap="round"><circle cx="7.300" cy="7.300" r="5.200"/><path d="M11.300 11.300l4.700 4.700" stroke-width="2.600"/><path d="M7.300 5v4.600M5 7.300h4.600" stroke-width="1.500"/></svg>
<div style="left:380px;top:763px;width:42px;height:42px;border:1px solid #dcdee3;border-radius:4.500px"></div>
<svg style="left:392px;top:775px" width="18" height="18" viewBox="0 0 18 18" fill="none" stroke="#f2f3f5" stroke-width="2" stroke-linecap="round"><circle cx="7.300" cy="7.300" r="5.200"/><path d="M11.300 11.300l4.700 4.700" stroke-width="2.600"/><path d="M5 7.300h4.600" stroke-width="1.500"/></svg>
<!-- bottom center -->
<div style="left:813px;top:763px;width:158px;height:42px;border-radius:4px;background:#ff6757"></div>
<svg style="left:834px;top:776px" width="15" height="16" viewBox="0 0 448 512" fill="#fff"><path d="M437 419L320 229V96h8a24 24 0 0 0 24-24V24a24 24 0 0 0-24-24H120a24 24 0 0 0-24 24v48a24 24 0 0 0 24 24h8v133L11 419C-18 465 15 512 70 512h308c55 0 88-47 59-93zM160 96h128v150l46 74H114l46-74z"/></svg>
<span class="t" style="left:856.200px;top:776.700px;font-size:14px;color:#fff;-webkit-text-stroke:.4px;letter-spacing:.8px">Test workflow</span>
<div style="left:981px;top:763px;width:42px;height:42px;border-radius:4px;background:#ff6757"></div>
<svg style="left:995px;top:776px" width="14.500" height="16" viewBox="0 0 448 512" fill="#fff"><path d="M32 464a48 48 0 0 0 48 48h288a48 48 0 0 0 48-48V128H32zM432 32H312l-9.400-18.700A24 24 0 0 0 281.100 0H166.800a23.720 23.720 0 0 0-21.400 13.300L136 32H16A16 16 0 0 0 0 48v32a16 16 0 0 0 16 16h416a16 16 0 0 0 16-16V48a16 16 0 0 0-16-16z"/></svg>
<!--/APP-->
</div></div>
<div id="rim"></div>
</body>
</html>
